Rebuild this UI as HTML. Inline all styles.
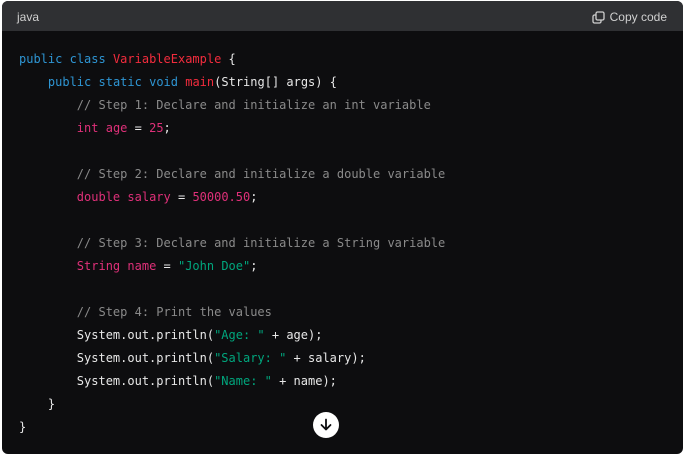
<!DOCTYPE html>
<html><head><style>
html,body{margin:0;padding:0;background:#fff;width:685px;height:456px;overflow:hidden}
.box{position:absolute;left:2px;top:1px;width:681px;height:453px;border-radius:6px;overflow:hidden;background:#0d0d0f}
.hd{height:30px;background:#2f3033;color:#d0d0d0;font:12px "Liberation Sans",sans-serif;position:relative}
.hd .l{position:absolute;left:15px;top:9px}
.hd .r{position:absolute;right:16px;top:9px;display:flex;align-items:center;gap:5px}
pre{margin:0;padding:17px 0 0 17px;font:12px/23px "DejaVu Sans Mono",monospace;color:#e8e8e8}
.k{color:#2e95d3}.t{color:#df3079}.f{color:#f22c3d}.c{color:#8a8a8a}.s{color:#00a67d}
.btn{position:absolute;left:311px;top:411px;width:26px;height:26px;border-radius:50%;background:#fff}
</style></head><body>
<div class="box">
<div class="hd"><span class="l">java</span><span class="r"><svg width="13" height="13" viewBox="0 0 13 13" fill="none" stroke="#d0d0d0" stroke-width="1.3"><rect x="4" y="1" width="8" height="8" rx="1.5"/><path d="M4 4H2.5A1.5 1.5 0 0 0 1 5.5v5A1.5 1.5 0 0 0 2.5 12h5A1.5 1.5 0 0 0 9 10.5V9"/></svg>Copy code</span></div>
<pre><span class="k">public</span> <span class="k">class</span> <span class="f">VariableExample</span> {
    <span class="k">public</span> <span class="k">static</span> <span class="k">void</span> <span class="f">main</span>(String[] args) {
        <span class="c">// Step 1: Declare and initialize an int variable</span>
        <span class="t">int</span> <span class="t">age</span> = <span class="t">25</span>;

        <span class="c">// Step 2: Declare and initialize a double variable</span>
        <span class="t">double</span> <span class="t">salary</span> = <span class="t">50000.50</span>;

        <span class="c">// Step 3: Declare and initialize a String variable</span>
        <span class="t">String</span> <span class="t">name</span> = <span class="s">"John Doe"</span>;

        <span class="c">// Step 4: Print the values</span>
        System.out.println(<span class="s">"Age: "</span> + age);
        System.out.println(<span class="s">"Salary: "</span> + salary);
        System.out.println(<span class="s">"Name: "</span> + name);
    }
}</pre>
<div class="btn"><svg width="26" height="26" viewBox="0 0 26 26" fill="none" stroke="#0d0d0f" stroke-width="1.8" stroke-linecap="round" stroke-linejoin="round"><path d="M13 7.5v10M8.5 13l4.5 4.5 4.5-4.5"/></svg></div>
</div>
</body></html>
